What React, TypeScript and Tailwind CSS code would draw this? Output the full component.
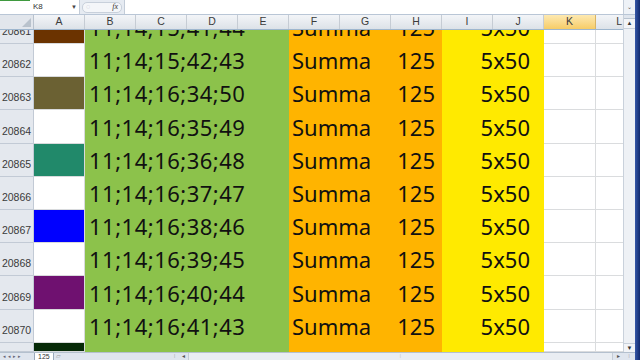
import React from 'react';

const rows = [
  { n: '20861', fill: 'bg-[#6b3300]', b: '11;14;15;41;44', h: 'h-[14px]' },
  { n: '20862', fill: 'bg-white', b: '11;14;15;42;43', h: 'h-[33.2px]' },
  { n: '20863', fill: 'bg-[#6b6133]', b: '11;14;16;34;50', h: 'h-[33.2px]' },
  { n: '20864', fill: 'bg-white', b: '11;14;16;35;49', h: 'h-[33.2px]' },
  { n: '20865', fill: 'bg-[#21896a]', b: '11;14;16;36;48', h: 'h-[33.2px]' },
  { n: '20866', fill: 'bg-white', b: '11;14;16;37;47', h: 'h-[33.2px]' },
  { n: '20867', fill: 'bg-[#0000ff]', b: '11;14;16;38;46', h: 'h-[33.2px]' },
  { n: '20868', fill: 'bg-white', b: '11;14;16;39;45', h: 'h-[33.2px]' },
  { n: '20869', fill: 'bg-[#6f1170]', b: '11;14;16;40;44', h: 'h-[33.2px]' },
  { n: '20870', fill: 'bg-white', b: '11;14;16;41;43', h: 'h-[33.2px]' },
  { n: '', fill: 'bg-[#062a08]', b: '', h: 'h-[9px]' },
];

const cols = ['A', 'B', 'C', 'D', 'E', 'F', 'G', 'H', 'I', 'J'];

const big = "font-['Noto_Sans',sans-serif] text-[22px] leading-[22px] text-[#111]";

export default function App() {
  return (
    <div className="w-[640px] h-[360px] flex overflow-hidden bg-white font-['Liberation_Sans',Arial,sans-serif]">
      <div className="flex-1 flex flex-col min-w-0">
        {/* formula bar */}
        <div className="h-[15px] flex items-stretch bg-[#e6ebf2] border-b border-[#b9c6d6] relative">
          <div className="absolute left-0 top-0 w-[30px] h-[1px] bg-[#3f9a3f]" />
          <div className="w-[80px] bg-white border-r border-[#c3ccd8] flex items-center justify-between pl-[33px] pr-[2px] text-[8px] text-[#333]">
            <span>K8</span>
            <span className="text-[6px] text-[#444]">▼</span>
          </div>
          <div className="w-[44px] flex items-center px-[2px]">
            <div className="flex-1 h-[11px] rounded-[5px] border border-[#c8d0db] bg-[#f4f6f9] flex items-center justify-between px-[3px]">
              <span className="text-[7px] text-[#aab]">◌</span>
              <span className="text-[8px] italic text-[#333] font-['Liberation_Serif',serif]">fx</span>
            </div>
          </div>
          <div className="flex-1 bg-white border-l border-[#c3ccd8]" />
          <div className="w-[12px] bg-[#eef2f7] border-l border-[#c3ccd8] flex items-center justify-center text-[6px] text-[#555]">⌄</div>
        </div>

        <div className="flex-1 flex min-h-0">
          {/* grid */}
          <div className="flex-1 flex flex-col min-w-0 overflow-hidden">
            <div className="h-[15px] flex shrink-0 border-b border-[#9eb6ce] text-[10.5px] text-[#3b3b3b] relative z-10">
              <div className="w-[34px] shrink-0 bg-[#e2e6ec] border-r border-[#b9c2cd] relative">
                <div className="absolute right-[2px] bottom-[2px] w-0 h-0 border-l-[9px] border-l-transparent border-b-[9px] border-b-[#b9c2cc]" />
              </div>
              {cols.map((c) => (
                <div key={c} className="w-[51px] shrink-0 bg-gradient-to-b from-[#f3f5f8] to-[#dde2e8] border-r border-[#c6ccd4] flex items-center justify-center">
                  {c}
                </div>
              ))}
              <div className="w-[52px] shrink-0 bg-gradient-to-b from-[#fde9b0] to-[#f6cc66] border-r border-[#d9b463] flex items-center justify-center">K</div>
              <div className="flex-1 bg-gradient-to-b from-[#f3f5f8] to-[#dde2e8] flex items-center justify-end pr-[1px]">L</div>
            </div>

            {rows.map((r, i) => (
              <div key={i} className={`${r.h} flex shrink-0 overflow-hidden`}>
                <div className="w-[34px] shrink-0 bg-[#e4e8ee] border-r border-b border-[#c2cad5] flex items-end justify-center pb-[6px] text-[10.5px] leading-[11px] text-[#3a3a3a]">
                  {r.n}
                </div>
                <div className={`w-[51px] shrink-0 ${r.fill} border-r border-b border-[#d8dadc]`} />
                <div className={`w-[204px] shrink-0 bg-[#8cc24b] flex items-end pl-[4px] pb-[6px] ${big}`}>
                  <span className="whitespace-nowrap tracking-[0.5px]">{r.b}</span>
                </div>
                <div className={`w-[153px] shrink-0 bg-[#ffb400] flex items-end justify-between pl-[3px] pr-[7px] pb-[6px] ${big}`}>
                  {r.b && <span>Summa</span>}
                  {r.b && <span>125</span>}
                </div>
                <div className={`w-[102px] shrink-0 bg-[#ffea00] flex items-end justify-end pr-[14px] pb-[6px] ${big}`}>
                  {r.b && <span>5x50</span>}
                </div>
                <div className="w-[52px] shrink-0 border-r border-b border-[#dadcde]" />
                <div className="flex-1 border-b border-[#dadcde]" />
              </div>
            ))}
          </div>

          {/* vertical scrollbar */}
          <div className="w-[12px] flex flex-col bg-[#eaeef3] border-l border-[#c9d1db]">
            <div className="h-[4px] bg-[#dfe5ed] border-b border-[#b8c3d0]" />
            <div className="h-[10px] flex items-center justify-center text-[6px] text-[#333] border-b border-[#c9d1db] bg-[#f2f4f7]">▲</div>
            <div className="flex-1 bg-[#eef1f5]" />
            <div className="h-[9px] flex items-center justify-center text-[6px] text-[#333] border-t border-[#c9d1db] bg-[#f2f4f7]">▼</div>
          </div>
        </div>

        {/* sheet tabs + horizontal scrollbar */}
        <div className="h-[8px] flex items-center bg-[#dfe5ee] border-t border-[#b4c0ce] text-[6px] leading-[7px] text-[#555]">
          <div className="w-[34px] flex items-center gap-[2px] pl-[3px] text-[5px] text-[#667]">
            <span>◂</span><span>◂</span><span>▸</span><span>▸</span>
          </div>
          <div className="h-full px-[3px] bg-white border-x border-[#9aa9bb] text-[7px] text-[#333]">125</div>
          <div className="w-[10px] text-center text-[#999]">▱</div>
          <div className="w-[110px]" />
          <div className="w-[6px] text-[#888]">⁞</div>
          <div className="w-[8px] text-[#555] text-center">◂</div>
          <div className="flex-1 h-full bg-[#e9edf2] border-x border-[#c4ccd6] flex items-center justify-center text-[#aaa]">⁞</div>
          <div className="w-[10px] text-[#555] text-center">▸</div>
          <div className="w-[12px] text-[#888] text-center">⁞</div>
        </div>
      </div>

      {/* window border */}
      <div className="w-[5px] bg-gradient-to-r from-[#3557a8] to-[#122a6e]" />
    </div>
  );
}
